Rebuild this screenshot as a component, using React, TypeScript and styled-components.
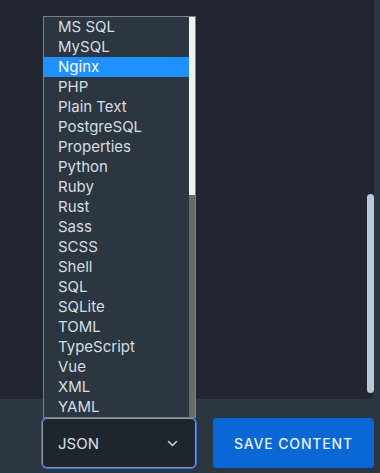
import styled, { createGlobalStyle } from "styled-components";

const GlobalStyle = createGlobalStyle`
  html, body {
    margin: 0;
    padding: 0;
    background: #2b3640;
    font-family: Inter, "Noto Sans", sans-serif;
  }
`;

const Page = styled.div`
  display: flex;
  flex-direction: column;
  height: 473px;
  width: 380px;
  position: relative;
  overflow: hidden;
`;

const Editor = styled.div`
  flex: 1;
  position: relative;
  background: #222631;
  margin-right: 6px;
  border-bottom-right-radius: 6px;
`;

const EditorThumb = styled.div`
  position: absolute;
  right: 0;
  top: 194px;
  width: 7px;
  height: 199px;
  border-radius: 4px;
  background: #b9cadb;
`;

const Footer = styled.div`
  display: flex;
  gap: 17px;
  height: 74px;
  box-sizing: border-box;
  padding: 19px 6px 5px 42px;
`;

const Select = styled.div`
  width: 154px;
  height: 50px;
  box-sizing: border-box;
  display: flex;
  align-items: center;
  justify-content: space-between;
  padding: 0 17px 0 15px;
  background: #1f252d;
  border: 1px solid #8c98a6;
  border-radius: 5px;
  box-shadow: 0 0 0 1px #2f6ee0;
  color: #d9e2ec;
  font-size: 15px;
`;

const SaveButton = styled.button`
  width: 161px;
  height: 50px;
  border: none;
  border-radius: 4px;
  background: #0a68d6;
  color: #e8f0fa;
  font-family: Inter, "Noto Sans", sans-serif;
  font-size: 14px;
  font-weight: 500;
  letter-spacing: 0.85px;
`;

const ListBox = styled.div`
  position: absolute;
  top: 16px;
  left: 43px;
  width: 153px;
  height: 402px;
  box-sizing: border-box;
  border: 1px solid #7d8186;
  background: #2c3640;
  display: flex;
`;

const Options = styled.div`
  flex: 1;
  display: flex;
  flex-direction: column;
`;

const Option = styled.div<{ $active?: boolean }>`
  height: 20px;
  line-height: 20px;
  padding-left: 14px;
  font-size: 15px;
  color: ${(p) => (p.$active ? "#ffffff" : "#d6dee6")};
  background: ${(p) => (p.$active ? "#1e90ff" : "transparent")};
`;

const Track = styled.div`
  width: 6px;
  display: flex;
  flex-direction: column;
  background: #f1f1f1;
`;

const Thumb = styled.div`
  margin-top: auto;
  height: 222px;
  background: #6b6b6b;
`;

const languages = [
  "MS SQL",
  "MySQL",
  "Nginx",
  "PHP",
  "Plain Text",
  "PostgreSQL",
  "Properties",
  "Python",
  "Ruby",
  "Rust",
  "Sass",
  "SCSS",
  "Shell",
  "SQL",
  "SQLite",
  "TOML",
  "TypeScript",
  "Vue",
  "XML",
  "YAML",
];

export default function App() {
  return (
    <>
      <GlobalStyle />
      <Page>
        <Editor>
          <EditorThumb />
        </Editor>
        <Footer>
          <Select>
            <span>JSON</span>
            <svg width="11" height="7" viewBox="0 0 11 7" fill="none">
              <path d="M1.5 1.5l4 4 4-4" stroke="#c2d0de" strokeWidth="1.6" strokeLinecap="round" strokeLinejoin="round" />
            </svg>
          </Select>
          <SaveButton>SAVE CONTENT</SaveButton>
        </Footer>
        <ListBox>
          <Options>
            {languages.map((l) => (
              <Option key={l} $active={l === "Nginx"}>
                {l}
              </Option>
            ))}
          </Options>
          <Track>
            <Thumb />
          </Track>
        </ListBox>
      </Page>
    </>
  );
}
